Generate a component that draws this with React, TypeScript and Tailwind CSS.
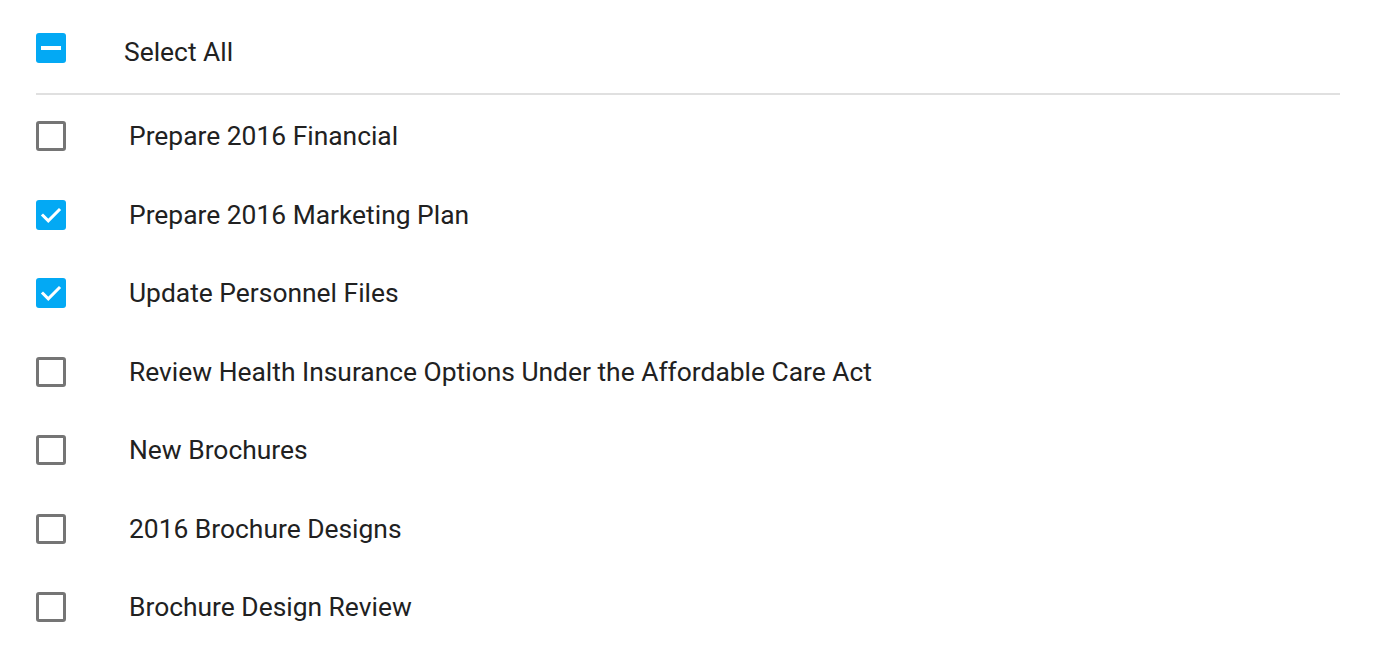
import React from "react";

const items = [
  { label: "Prepare 2016 Financial", checked: false },
  { label: "Prepare 2016 Marketing Plan", checked: true },
  { label: "Update Personnel Files", checked: true },
  { label: "Review Health Insurance Options Under the Affordable Care Act", checked: false },
  { label: "New Brochures", checked: false },
  { label: "2016 Brochure Designs", checked: false },
  { label: "Brochure Design Review", checked: false },
];

function Box({ state }: { state: "on" | "off" | "mixed" }) {
  if (state === "off") {
    return <div className="w-[30px] h-[30px] rounded-[3px] border-[3px] border-[#757575] bg-white shrink-0" />;
  }
  return (
    <div className="w-[30px] h-[30px] rounded-[3px] bg-[#03a9f4] shrink-0 flex items-center justify-center">
      {state === "mixed" ? (
        <div className="w-[20px] h-[4px] bg-white" />
      ) : (
        <svg width="30" height="30" viewBox="0 0 30 30">
          <path d="M7 15.5 L12.3 20.8 L23 10" fill="none" stroke="white" strokeWidth="3" strokeLinecap="square" />
        </svg>
      )}
    </div>
  );
}

export default function App() {
  return (
    <div className="w-[1380px] h-[660px] bg-white pl-[36px] pr-[40px] pt-[8px]" style={{ fontFamily: "Roboto, 'Liberation Sans', sans-serif" }}>
      <div className="h-[79px] flex items-center">
        <Box state="mixed" />
        <span className="ml-[58px] text-[26.4px] leading-none pt-[10px] text-[#212121]">Select All</span>
      </div>
      <div className="mt-[6px] h-[2px] bg-[#e0e0e0]" />
      <div className="flex flex-col pt-[2px]">
        {items.map((it) => (
          <div key={it.label} className="h-[78.5px] flex items-center">
            <Box state={it.checked ? "on" : "off"} />
            <span className="ml-[63px] text-[26.4px] leading-none text-[#212121]">{it.label}</span>
          </div>
        ))}
      </div>
    </div>
  );
}
